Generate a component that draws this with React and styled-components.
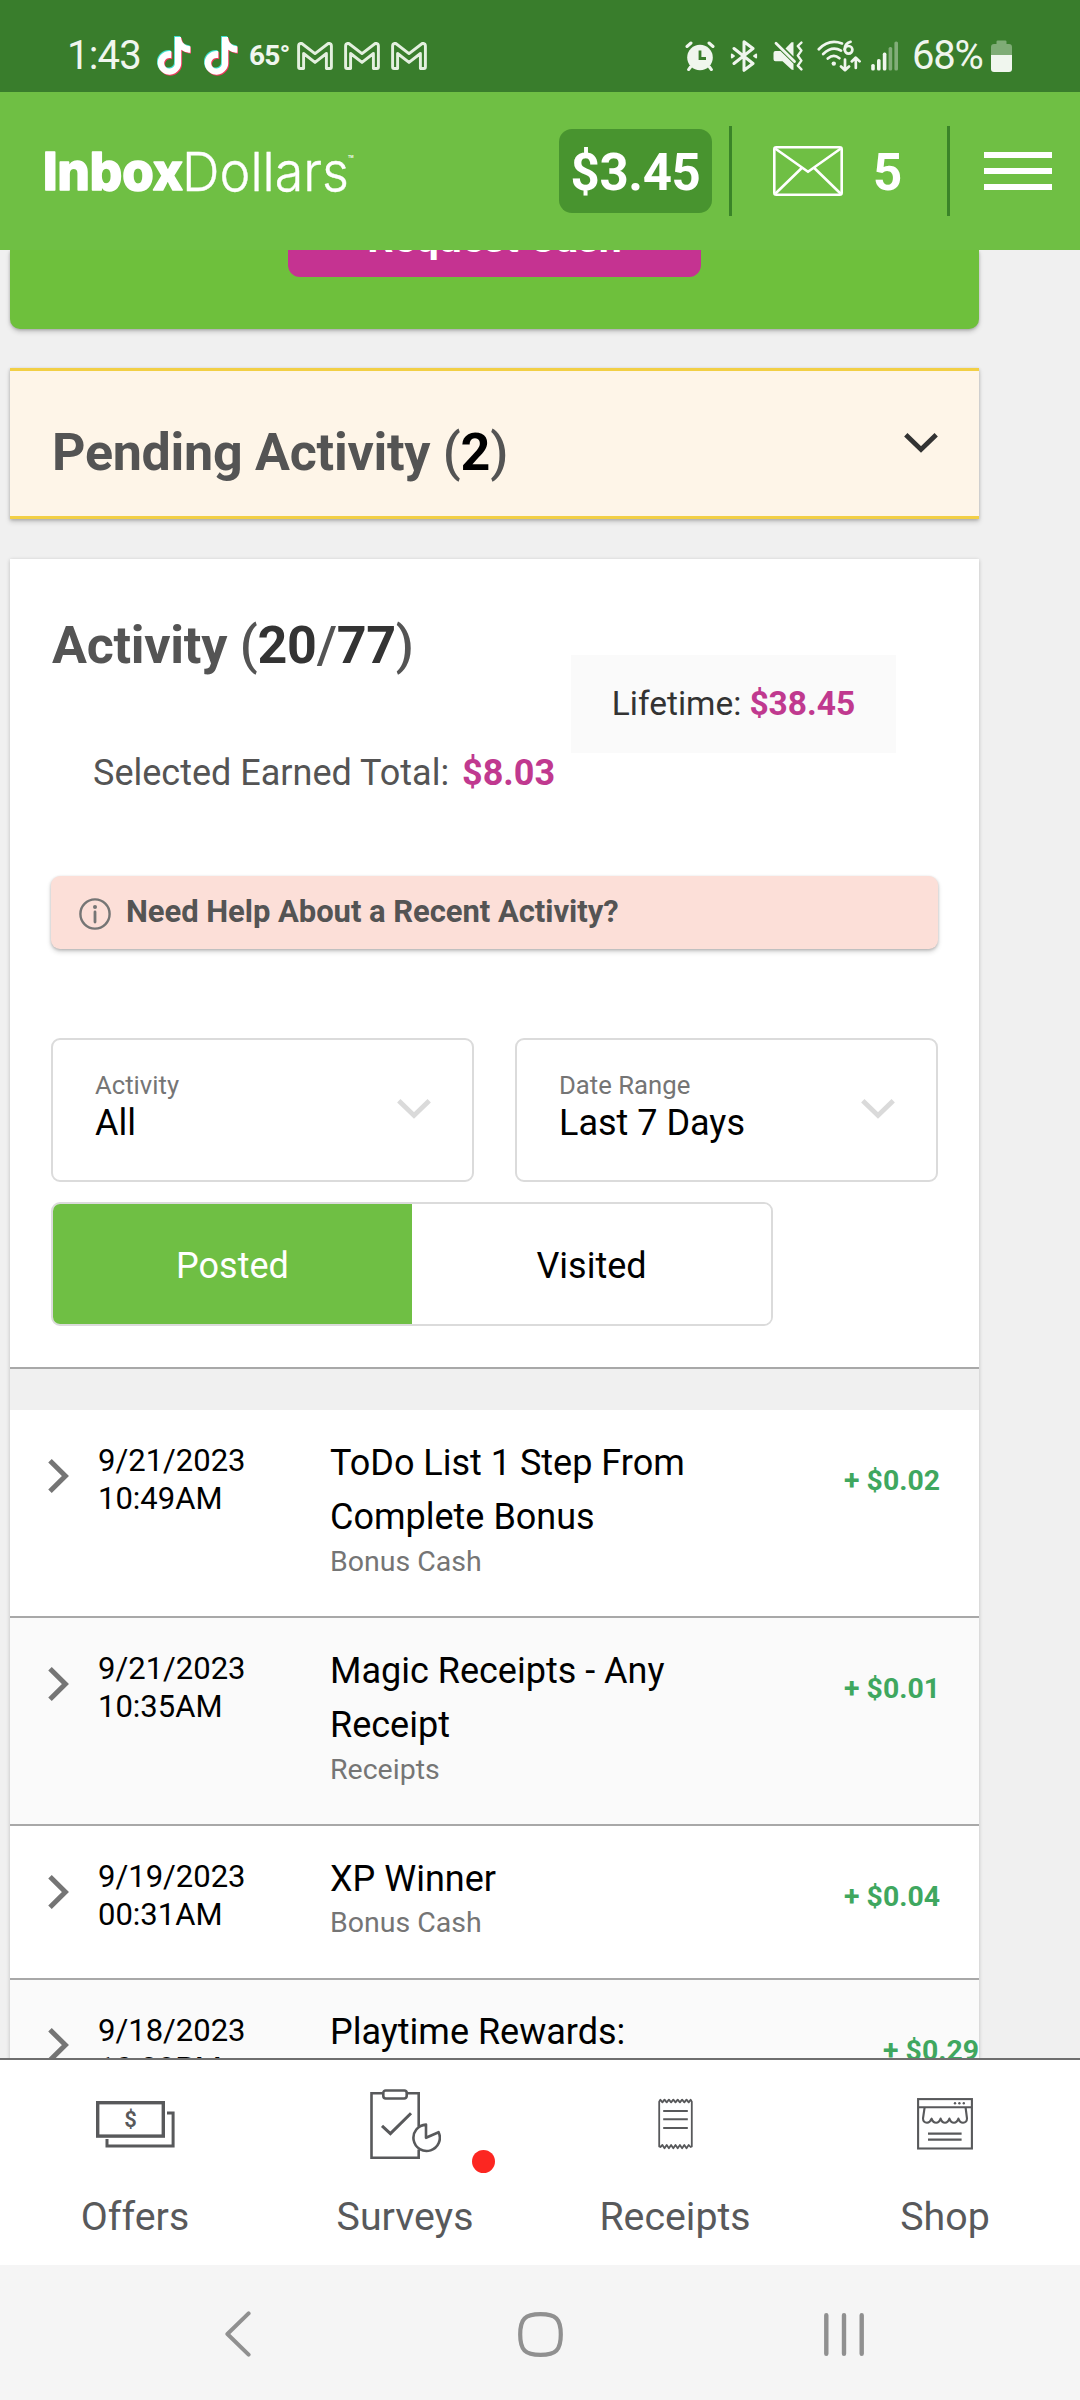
import React from 'react';
import styled, { createGlobalStyle } from 'styled-components';

const GlobalStyle = createGlobalStyle`
  *, *::before, *::after { box-sizing: border-box; }
  body { margin: 0; background: #f0f0f0; }
  svg { display: block; flex: none; }
`;

const Screen = styled.div`
  width: 1080px;
  height: 2400px;
  display: flex;
  flex-direction: column;
  overflow: hidden;
  background: #f0f0f0;
  color: #000;
  font-family: Roboto, 'Liberation Sans', sans-serif;
`;

/* ---------- system status bar ---------- */

const StatusBar = styled.div`
  height: 92px;
  flex: none;
  display: flex;
  align-items: center;
  padding: 20px 68px 0 67px;
  background: #397d2c;
  color: #f0f6ee;
`;

const StatusText = styled.span`
  width: ${(p) => p.$width}px;
  font-size: 40px;
  line-height: 46px;
  letter-spacing: ${(p) => p.$spacing || 0}px;
  white-space: nowrap;
`;

const Temperature = styled.span`
  width: 40px;
  margin-left: 11px;
  font-size: 28px;
  font-weight: 700;
  line-height: 46px;
  letter-spacing: -0.8px;
  white-space: nowrap;
`;

const StatusIcon = styled.span`
  margin-left: ${(p) => p.$gap || 0}px;
`;

const StatusRight = styled.div`
  display: flex;
  align-items: center;
  margin-left: auto;
`;

/* ---------- app header ---------- */

const Header = styled.header`
  height: 158px;
  flex: none;
  display: flex;
  align-items: center;
  padding: 0 28px 0 43px;
  background: #6fbf44;
  color: #fff;
`;

const Balance = styled.div`
  width: 153px;
  height: 84px;
  margin: 0 17px 0 auto;
  padding-top: 3px;
  display: flex;
  align-items: center;
  justify-content: center;
  border-radius: 13px;
  background: #48942f;
  font-size: 51px;
  font-weight: 700;
  line-height: 60px;
  letter-spacing: -0.4px;
`;

const Divider = styled.div`
  width: 3px;
  height: 90px;
  background: #3a8428;
`;

const Inbox = styled.div`
  width: 215px;
  display: flex;
  align-items: center;
  padding-left: 41px;
`;

const InboxCount = styled.span`
  margin: 3px 0 0 30px;
  font-size: 51px;
  font-weight: 700;
  line-height: 60px;
`;

const Burger = styled.div`
  width: 68px;
  margin-left: 34px;
  display: flex;
  flex-direction: column;
  gap: 10px;
  span { height: 6px; background: #fff; }
`;

/* ---------- page ---------- */

const Content = styled.main`
  height: 1808px;
  flex: none;
  overflow: hidden;
  display: flex;
  flex-direction: column;
  padding-left: 10px;
`;

const shadow = '0 1px 3px rgba(0,0,0,0.2), 0 3px 5px rgba(0,0,0,0.16)';

const CashCard = styled.section`
  width: 969px;
  height: 79px;
  flex: none;
  display: flex;
  justify-content: center;
  align-items: flex-start;
  border-radius: 0 0 10px 10px;
  background: #6ec03c;
  box-shadow: ${shadow};
`;

const CashButton = styled.button`
  width: 413px;
  height: 80px;
  margin-top: -53px;
  padding: 0;
  border: 0;
  border-radius: 12px;
  background: #c53391;
  color: #fff;
  font: 700 41px/82px Roboto, sans-serif;
`;

const PendingCard = styled.section`
  width: 969px;
  height: 151px;
  flex: none;
  margin-top: 39px;
  display: flex;
  justify-content: space-between;
  align-items: flex-start;
  padding: 52px 41px 0 42px;
  border: solid #f2cf45;
  border-width: 3px 0;
  background: #fef5e8;
  box-shadow: ${shadow};
`;

const Title = styled.h2`
  margin: 0;
  font-size: 52px;
  font-weight: 700;
  line-height: 60px;
  letter-spacing: -0.27px;
  color: #545454;
  white-space: nowrap;
  em { font-style: normal; color: ${(p) => p.$strong}; }
  i { font-style: normal; font-weight: 500; }
`;

const ChevronHolder = styled.span`
  margin-top: ${(p) => p.$top || 0}px;
`;

const ActivityCard = styled.section`
  width: 969px;
  height: 1700px;
  flex: none;
  margin-top: 40px;
  background: #fff;
  box-shadow: 0 1px 4px rgba(0, 0, 0, 0.22);
`;

const Summary = styled.div`
  height: 317px;
  display: flex;
  align-items: flex-start;
  padding-left: 41px;
`;

const SummaryMain = styled.div`
  width: 520px;
  padding: 57px 0 0 1px;
`;

const Selected = styled.p`
  margin: 75px 0 0;
  padding-left: 41px;
  font-size: 36px;
  line-height: 44px;
  color: #545454;
  white-space: nowrap;
  b { margin-left: 4px; color: #c0398f; }
`;

const Lifetime = styled.div`
  width: 325px;
  height: 98px;
  margin-top: 96px;
  padding-bottom: 1px;
  display: flex;
  align-items: center;
  justify-content: center;
  gap: 8px;
  background: #fafafa;
  color: #333;
  font-size: 33.5px;
  line-height: 40px;
  b { color: #c0398f; }
`;

const HelpBar = styled.div`
  width: 887px;
  height: 73px;
  margin-left: 41px;
  display: flex;
  align-items: center;
  padding: 2px 0 0 28px;
  border-radius: 9px;
  background: #fcdfd8;
  box-shadow: ${shadow};
`;

const HelpText = styled.span`
  margin: -4px 0 0 15px;
  font-size: 31px;
  font-weight: 700;
  line-height: 36px;
  letter-spacing: -0.05px;
  color: #545454;
`;

const Filters = styled.div`
  display: grid;
  grid-template-columns: 423px 423px;
  gap: 41px;
  margin: 89px 0 0 41px;
`;

const Select = styled.div`
  height: 144px;
  display: flex;
  justify-content: space-between;
  padding: 29px 41px 0 42px;
  border: 2px solid #dbdbdb;
  border-radius: 9px;
`;

const SelectLabel = styled.div`
  font-size: 25.7px;
  line-height: 32px;
  color: #757575;
`;

const SelectValue = styled.div`
  font-size: 36px;
  line-height: 44px;
  color: #000;
`;

const Toggle = styled.div`
  width: 722px;
  height: 124px;
  margin: 20px 0 41px 41px;
  display: grid;
  grid-template-columns: 1fr 1fr;
  overflow: hidden;
  border: 2px solid #dbdbdb;
  border-radius: 9px;
`;

const ToggleOption = styled.div`
  display: flex;
  align-items: center;
  justify-content: center;
  padding-top: 3px;
  font-size: 36px;
  line-height: 44px;
  background: ${(p) => (p.$active ? '#6fbf44' : '#fff')};
  color: ${(p) => (p.$active ? '#fff' : '#000')};
`;

const Separator = styled.div`
  height: 43px;
  border-top: 2px solid #a8a8a8;
  background: #f0f0f0;
`;

const Row = styled.div`
  display: grid;
  grid-template-columns: 88px 232px 380px 1fr;
  align-items: start;
  padding: 25.5px ${(p) => p.$right ?? 39}px 35.5px 0;
  border-bottom: 2px solid #a8a8a8;
  background: ${(p) => (p.$alt ? '#fafafa' : '#fff')};
`;

const RowChevron = styled.span`
  padding: 23px 0 0 38px;
`;

const RowDate = styled.div`
  padding-top: 6.5px;
  font-size: 31px;
  line-height: 38px;
`;

const RowTitle = styled.div`
  font-size: 36px;
  line-height: 54.5px;
`;

const RowKind = styled.div`
  font-size: 28.5px;
  line-height: 34px;
  padding-bottom: 2px;
  color: #757575;
`;

const Amount = styled.div`
  padding-top: 29.5px;
  text-align: right;
  font-size: 28.4px;
  font-weight: 700;
  line-height: 32px;
  color: #3fa75f;
  white-space: nowrap;
`;

/* ---------- bottom navigation ---------- */

const TabBar = styled.nav`
  height: 207px;
  flex: none;
  display: grid;
  grid-template-columns: repeat(4, 1fr);
  border-top: 2px solid #6e6e6e;
  background: #fff;
`;

const Tab = styled.div`
  position: relative;
  display: flex;
  flex-direction: column;
  align-items: center;
  padding-top: 24px;
`;

const TabIcon = styled.div`
  height: 80px;
  display: flex;
  align-items: center;
`;

const TabLabel = styled.span`
  margin-top: 30px;
  font-size: 39.3px;
  line-height: 46px;
  color: #58595b;
`;

const Dot = styled.span`
  position: absolute;
  left: 202px;
  top: 90px;
  width: 23px;
  height: 23px;
  border-radius: 50%;
  background: #fc2621;
`;

const SystemNav = styled.div`
  height: 135px;
  flex: none;
  display: grid;
  grid-template-columns: repeat(3, 1fr);
  align-items: center;
  justify-items: center;
  padding: 3px 85px 0 87px;
  background: #f5f5f5;
`;

/* ---------- drawings ---------- */

const NOTE =
  'M12.525.02c1.31-.02 2.61-.01 3.91-.02.08 1.53.63 3.09 1.75 4.17 1.12 1.11 2.7 1.62 4.24 1.79v4.03c-1.44-.05-2.89-.35-4.2-.97-.57-.26-1.1-.59-1.62-.93-.01 2.92.01 5.84-.02 8.75-.08 1.4-.54 2.79-1.35 3.94-1.31 1.92-3.58 3.17-5.91 3.21-1.43.08-2.86-.31-4.08-1.03-2.02-1.19-3.44-3.37-3.65-5.71-.02-.5-.03-1-.01-1.49.18-1.9 1.12-3.72 2.58-4.96 1.66-1.44 3.98-2.13 6.15-1.72.02 1.48-.04 2.96-.04 4.44-.99-.32-2.15-.23-3.02.37-.63.41-1.11 1.04-1.36 1.75-.21.51-.15 1.07-.14 1.61.24 1.64 1.82 3.02 3.5 2.87 1.12-.01 2.19-.66 2.77-1.61.19-.33.4-.67.41-1.06.1-1.79.06-3.57.07-5.36.01-4.03-.01-8.05.02-12.07z';

const TikTok = () => (
  <svg width="34" height="40" viewBox="0 0 34 40">
    <path d={NOTE} fill="#3fe0d0" transform="translate(-2.6 0) scale(1.57)" />
    <path d={NOTE} fill="#ee3a5c" transform="translate(-0.9 2) scale(1.57)" />
    <path d={NOTE} fill="#fff" transform="translate(-1.8 1) scale(1.57)" />
  </svg>
);

const Gmail = () => (
  <svg width="36" height="28" viewBox="0 0 36 28" fill="none" stroke="#e4f0df" strokeWidth="2.9" strokeLinejoin="round">
    <path d="M3.6 1.5H4.8L18 11.6L31.2 1.5H32.4Q34.4 1.8 34.4 4V25Q34.4 26.5 33 26.5H29.4V11.5L18 20.4L6.6 11.5V26.5H3Q1.6 26.5 1.6 25V4Q1.6 1.8 3.6 1.5Z" />
  </svg>
);

const Alarm = () => (
  <svg width="30" height="30" viewBox="0 0 30 30">
    <circle cx="15" cy="16.5" r="12.8" fill="#f0f6ee" />
    <path d="M2 5.5L6 2M28 5.5L24 2M5.5 26L3.6 28.6M24.5 26L26.4 28.6" stroke="#f0f6ee" strokeWidth="3" strokeLinecap="round" />
    <path d="M15 9.5V17.5H21" fill="none" stroke="#397d2c" strokeWidth="2.8" />
  </svg>
);

const Bluetooth = () => (
  <svg width="28" height="32" viewBox="0 0 28 32" fill="none" stroke="#f0f6ee" strokeWidth="3" strokeLinejoin="round" strokeLinecap="round">
    <path d="M4 8.5L23 23.5L14 30.3V1.7L23 8.5L4 23.5" />
    <path d="M1.8 14.4V17.6L4 16ZM26.2 14.4V17.6L24 16Z" fill="#f0f6ee" strokeWidth="1.8" />
  </svg>
);

const Mute = () => (
  <svg width="30" height="30" viewBox="0 0 30 30" fill="#f0f6ee">
    <path d="M2.5 10H7.5L20.5 22.8V29L18.5 28.6L9.5 20.3H2.5Q.5 20.3.5 18.3V12Q.5 10 2.5 10Z" />
    <path d="M12.5 7.6L18.5 1.2H20.5V15.6Z" />
    <path d="M3 2.2L21.5 20.5" stroke="#f0f6ee" strokeWidth="2.8" strokeLinecap="round" />
    <path d="M28.4 1.6L24.8 5L28.4 9.6L24.8 14.6L28.4 19.6L24.8 24.6L28.4 28.4" fill="none" stroke="#f0f6ee" strokeWidth="2.4" strokeLinejoin="round" strokeLinecap="round" />
  </svg>
);

const Wifi = () => (
  <svg width="44" height="32" viewBox="0 0 44 32" fill="none" stroke="#f0f6ee" strokeWidth="2.7" strokeLinecap="round">
    <path d="M1.8 9.2Q12 -1.5 25 3.4M6.2 14Q15 5.6 24 10.6M10.8 18.6Q16.6 13.2 22.4 18.2" />
    <circle cx="16.8" cy="23.6" r="2.2" fill="#f0f6ee" stroke="none" />
    <path d="M33.6 1.8Q27.6 3.6 27.6 9.6" />
    <circle cx="31.6" cy="9.8" r="3.8" />
    <path d="M28 19.5V30M24 26.4L28 30.2L32 26.4M38.8 28V17.8M34.8 21.4L38.8 17.6L42.6 21.4" strokeLinejoin="round" />
  </svg>
);

const Signal = () => (
  <svg width="28" height="30" viewBox="0 0 28 30" fill="#f0f6ee">
    <rect x="0.2" y="23" width="3.6" height="6.6" rx="1.6" />
    <rect x="6" y="18" width="3.6" height="11.6" rx="1.6" />
    <rect x="11.8" y="11.6" width="3.6" height="18" rx="1.6" />
    <rect x="17.6" y="6" width="3.6" height="23.6" rx="1.6" opacity="0.4" />
    <rect x="23.4" y="0.4" width="3.6" height="29.2" rx="1.6" opacity="0.4" />
  </svg>
);

const Battery = () => (
  <svg width="21" height="32" viewBox="0 0 21 32">
    <path d="M5.5 4V1.6Q5.5.4 6.7.4H14.3Q15.5.4 15.5 1.6V4H18Q21 4 21 7V15H0V7Q0 4 3 4Z" fill="#7fac76" />
    <path d="M0 15H21V29Q21 32 18 32H3Q0 32 0 29Z" fill="#f0f6ee" />
  </svg>
);

const Logo = () => (
  <svg width="320" height="72" viewBox="0 0 320 72" fill="#fff" fontFamily="Inter, sans-serif">
    <text x="0" y="55.2" fontSize="52" fontWeight="800" textLength="140" lengthAdjust="spacingAndGlyphs" stroke="#fff" strokeWidth="1.6" strokeLinejoin="round">Inbox</text>
    <text x="139" y="55.7" fontSize="54" fontWeight="300" textLength="167" lengthAdjust="spacingAndGlyphs" stroke="#fff" strokeWidth="0.4">Dollars</text>
    <text x="305" y="23" fontSize="3.5" fontWeight="600">TM</text>
  </svg>
);

const Envelope = () => (
  <svg width="70" height="50" viewBox="0 0 70 50" fill="none" stroke="#fff" strokeWidth="2.6" strokeLinejoin="round">
    <rect x="1.3" y="1.3" width="67.4" height="47.4" rx="2" />
    <path d="M2.5 2.8L35 25.8L67.5 2.8M2.5 47.5L29 21.8M67.5 47.5L41 21.8" />
  </svg>
);

const ChevronDown = ({ color }) => (
  <svg width="34" height="20" viewBox="0 0 34 20" fill="none" stroke={color} strokeWidth="4.8">
    <path d="M1.8 1.8L17 16.4L32.2 1.8" />
  </svg>
);

const ChevronRight = () => (
  <svg width="21" height="34" viewBox="0 0 21 34" fill="none" stroke="#757575" strokeWidth="5">
    <path d="M2 1.8L17.4 17L2 32.2" />
  </svg>
);

const Info = () => (
  <svg width="32" height="32" viewBox="0 0 32 32" fill="none" stroke="#757575">
    <circle cx="16" cy="16" r="14.6" strokeWidth="2.4" />
    <path d="M16 14V24" strokeWidth="2.8" strokeLinecap="round" />
    <circle cx="16" cy="9" r="2" fill="#757575" stroke="none" />
  </svg>
);

const OffersIcon = () => (
  <svg width="79" height="47" viewBox="0 0 79 47" fill="none" stroke="#58595b" strokeWidth="3.4">
    <rect x="1.7" y="1.7" width="65.6" height="33.4" />
    <path d="M71 12H77.1V45H11V38" strokeWidth="3" />
    <text x="34.5" y="26" fontFamily="Roboto, sans-serif" fontSize="22" fontWeight="600" textAnchor="middle" fill="#58595b" stroke="none">$</text>
  </svg>
);

const SurveysIcon = () => (
  <svg width="71" height="70" viewBox="0 0 71 70" fill="none" stroke="#58595b" strokeWidth="2.6">
    <path d="M12.5 4.3H1.5V68.7H48.7V60.6M37 4.3H48.7V37.5" />
    <rect x="13.3" y="1.5" width="23.4" height="8" rx="2.4" />
    <path d="M12 36.8L20.4 44.6L41 24.2" strokeWidth="3" />
    <path d="M56 48.8V35.6A13.2 13.2 0 1 0 68.6 43.2Z" strokeLinejoin="round" />
  </svg>
);

const ReceiptsIcon = () => (
  <svg width="35" height="52" viewBox="0 0 35 52" fill="none" stroke="#58595b" strokeWidth="1.8" strokeLinejoin="round">
    <path d="M1.2 3.8V48.4L2.4 49L4.4 47L6.5 50.2L8.7 47L10.9 50.2L13.1 47L15.3 50.2L17.5 47L19.7 50.2L21.9 47L24.1 50.2L26.3 47L28.5 50.2L30.7 47L32.6 49L33.8 48.4V3.8L32.6 1.8L30.7 4.4L28.5 1.6L26.3 4.4L24.1 1.6L21.9 4.4L19.7 1.6L17.5 4.4L15.3 1.6L13.1 4.4L10.9 1.6L8.7 4.4L6.5 1.6L4.4 4.4L2.4 1.8Z" />
    <path d="M5.2 13H29.8M5.2 21.3H29.8M5.2 30H29.8" strokeWidth="2" />
  </svg>
);

const ShopIcon = () => (
  <svg width="56" height="52" viewBox="0 0 56 52" fill="none" stroke="#58595b" strokeWidth="2.1">
    <rect x="1.1" y="1.1" width="53.8" height="49.4" />
    <path d="M1 9.2H55" />
    <path d="M7.6 9.5L6 20.5Q6.2 24.6 10 24.8Q13 24.6 14.6 20.6Q16 24.8 19.2 24.8Q22.2 24.6 23.6 20.6Q25 24.8 28 24.8Q31 24.6 32.4 20.6Q34 24.8 37 24.8Q40 24.6 41.4 20.6Q43 24.8 46 24.8Q49.8 24.6 50 20.5L48.6 9.5" strokeLinejoin="round" />
    <path d="M11 35.6H44.6M11 41.6H44.6" strokeWidth="2.4" />
    <g fill="#58595b" stroke="none">
      <circle cx="38" cy="5.2" r="1.2" />
      <circle cx="42.4" cy="5.2" r="1.2" />
      <circle cx="46.8" cy="5.2" r="1.2" />
    </g>
  </svg>
);

const BackIcon = () => (
  <svg width="26" height="46" viewBox="0 0 26 46" fill="none" stroke="#909090" strokeWidth="4" strokeLinecap="round" strokeLinejoin="round">
    <path d="M23.6 2.4L2.4 23L23.6 43.6" />
  </svg>
);

const HomeIcon = () => (
  <svg width="45" height="45" viewBox="0 0 45 45" fill="none" stroke="#909090" strokeWidth="4.2">
    <path d="M22.5 2.2C38 2.2 42.8 7 42.8 22.5S38 42.8 22.5 42.8S2.2 38 2.2 22.5S7 2.2 22.5 2.2Z" />
  </svg>
);

const RecentsIcon = () => (
  <svg width="40" height="43" viewBox="0 0 40 43" stroke="#909090" strokeWidth="4.4" strokeLinecap="round">
    <path d="M2.3 2.3V40.7M20 2.3V40.7M37.7 2.3V40.7" />
  </svg>
);

/* ---------- data ---------- */

const rows = [
  { date: '9/21/2023', time: '10:49AM', title: 'ToDo List 1 Step From Complete Bonus', kind: 'Bonus Cash', amount: '+ $0.02' },
  { date: '9/21/2023', time: '10:35AM', title: 'Magic Receipts - Any Receipt', kind: 'Receipts', amount: '+ $0.01' },
  { date: '9/19/2023', time: '00:31AM', title: 'XP Winner', kind: 'Bonus Cash', amount: '+ $0.04' },
  { date: '9/18/2023', time: '10:28PM', title: 'Playtime Rewards:', kind: '', amount: '+ $0.29', right: 0 },
];

const tabs = [
  { label: 'Offers', Icon: OffersIcon },
  { label: 'Surveys', Icon: SurveysIcon, dot: true },
  { label: 'Receipts', Icon: ReceiptsIcon },
  { label: 'Shop', Icon: ShopIcon },
];

const filters = [
  { label: 'Activity', value: 'All' },
  { label: 'Date Range', value: 'Last 7 Days' },
];

export default function App() {
  return (
    <Screen>
      <GlobalStyle />
      <StatusBar>
        <StatusText $width={90} $spacing={-0.8}>1:43</StatusText>
        <StatusIcon><TikTok /></StatusIcon>
        <StatusIcon $gap={13}><TikTok /></StatusIcon>
        <Temperature>65°</Temperature>
        <StatusIcon $gap={8}><Gmail /></StatusIcon>
        <StatusIcon $gap={11}><Gmail /></StatusIcon>
        <StatusIcon $gap={11}><Gmail /></StatusIcon>
        <StatusRight>
          <StatusIcon><Alarm /></StatusIcon>
          <StatusIcon $gap={15}><Bluetooth /></StatusIcon>
          <StatusIcon $gap={15}><Mute /></StatusIcon>
          <StatusIcon $gap={14}><Wifi /></StatusIcon>
          <StatusIcon $gap={10}><Signal /></StatusIcon>
          <StatusIcon $gap={13}><StatusText as="div" $width={73} $spacing={-1.2}>68%</StatusText></StatusIcon>
          <StatusIcon $gap={6}><Battery /></StatusIcon>
        </StatusRight>
      </StatusBar>

      <Header>
        <Logo />
        <Balance>$3.45</Balance>
        <Divider />
        <Inbox>
          <Envelope />
          <InboxCount>5</InboxCount>
        </Inbox>
        <Divider />
        <Burger><span /><span /><span /></Burger>
      </Header>

      <Content>
        <CashCard>
          <CashButton>Request Cash</CashButton>
        </CashCard>

        <PendingCard>
          <Title $strong="#000">Pending Activity <i>(</i><em>2</em><i>)</i></Title>
          <ChevronHolder $top={10}><ChevronDown color="#333" /></ChevronHolder>
        </PendingCard>

        <ActivityCard>
          <Summary>
            <SummaryMain>
              <Title $strong="#333">Activity <i>(</i><em>20</em><i>/</i><em>77</em><i>)</i></Title>
              <Selected>Selected Earned Total: <b>$8.03</b></Selected>
            </SummaryMain>
            <Lifetime><span>Lifetime:</span><b>$38.45</b></Lifetime>
          </Summary>

          <HelpBar>
            <Info />
            <HelpText>Need Help About a Recent Activity?</HelpText>
          </HelpBar>

          <Filters>
            {filters.map((f) => (
              <Select key={f.label}>
                <div>
                  <SelectLabel>{f.label}</SelectLabel>
                  <SelectValue>{f.value}</SelectValue>
                </div>
                <ChevronHolder $top={30}><ChevronDown color="#dadada" /></ChevronHolder>
              </Select>
            ))}
          </Filters>

          <Toggle>
            <ToggleOption $active>Posted</ToggleOption>
            <ToggleOption>Visited</ToggleOption>
          </Toggle>

          <Separator />

          {rows.map((r, i) => (
            <Row key={r.date + r.time} $alt={i % 2 === 1} $right={r.right}>
              <RowChevron><ChevronRight /></RowChevron>
              <RowDate>{r.date}<br />{r.time}</RowDate>
              <div>
                <RowTitle>{r.title}</RowTitle>
                <RowKind>{r.kind}</RowKind>
              </div>
              <Amount>{r.amount}</Amount>
            </Row>
          ))}
        </ActivityCard>
      </Content>

      <TabBar>
        {tabs.map(({ label, Icon, dot }) => (
          <Tab key={label}>
            <TabIcon><Icon /></TabIcon>
            <TabLabel>{label}</TabLabel>
            {dot && <Dot />}
          </Tab>
        ))}
      </TabBar>

      <SystemNav>
        <BackIcon />
        <HomeIcon />
        <RecentsIcon />
      </SystemNav>
    </Screen>
  );
}
